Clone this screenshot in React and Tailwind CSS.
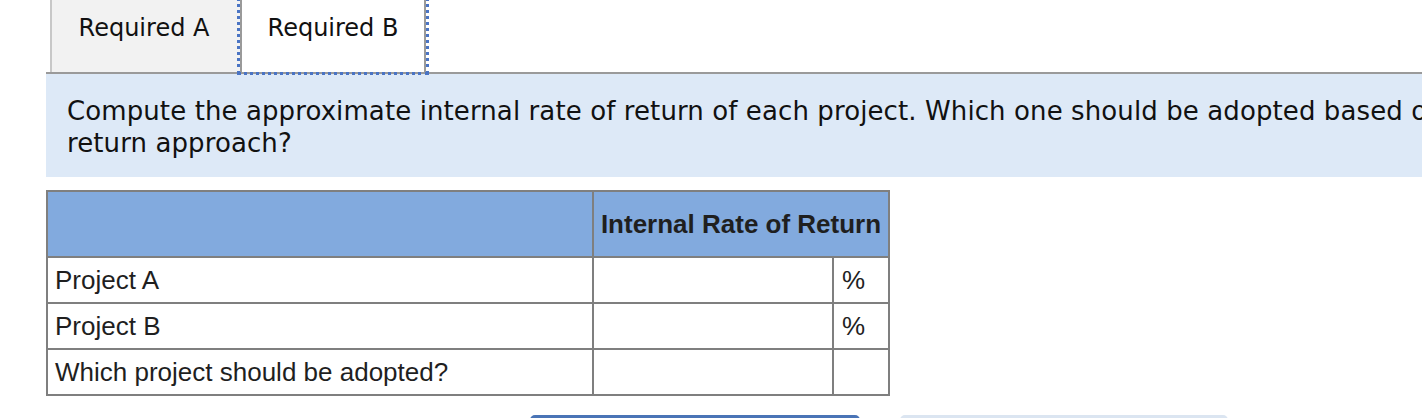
import React from "react";

export default function App() {
  const verdana = { fontFamily: '"DejaVu Sans", Verdana, sans-serif' };
  const arial = { fontFamily: '"Liberation Sans", Arial, Helvetica, sans-serif' };
  return (
    <div className="w-[1422px] h-[418px] overflow-hidden bg-white relative">
      <div className="ml-[46px] w-[1700px]">
        {/* Tabs */}
        <div className="flex h-[72px] pl-[4px] text-[24px] text-[#111]" style={verdana}>
          <div className="w-[190px] h-full bg-[#f2f2f2] border-l-2 border-[#c8c8c8] text-center pt-[12px] pr-[4px] leading-[32px]">
            Required A
          </div>
          <div className="w-[186px] h-full bg-white border-x-2 border-[#9a9a9a] text-center pt-[12px] leading-[32px] outline-[3px] outline-dotted outline-[#4a74c4] relative z-10">
            Required B
          </div>
        </div>
        {/* Question panel */}
        <div
          className="border-t-2 border-[#9a9a9a] bg-[#dde9f7] pl-[21px] pt-[21px] pb-[18px] text-[26px] leading-[32px] tracking-[0.1px] text-[#111] whitespace-nowrap"
          style={verdana}
        >
          Compute the approximate internal rate of return of each project. Which one should be adopted based on the internal rate of
          <br />
          return approach?
        </div>
        {/* Table */}
        <table
          className="mt-[13px] w-[842px] table-fixed border-collapse border-2 border-[#7f7f7f] text-[26px] text-[#1f1f1f]"
          style={arial}
        >
          <colgroup>
            <col className="w-[546px]" />
            <col className="w-[240px]" />
            <col className="w-[56px]" />
          </colgroup>
          <tbody>
            <tr className="h-[66px] bg-[#82aade]">
              <td className="border-2 border-[#7f7f7f]"></td>
              <td colSpan={2} className="border-2 border-[#7f7f7f] text-center font-bold">
                Internal Rate of Return
              </td>
            </tr>
            <tr className="h-[46px]">
              <td className="border-2 border-[#7f7f7f] pl-[7px]">Project A</td>
              <td className="border-2 border-[#7f7f7f]"></td>
              <td className="border-2 border-[#7f7f7f] pl-[8px]">%</td>
            </tr>
            <tr className="h-[46px]">
              <td className="border-2 border-[#7f7f7f] pl-[7px]">Project B</td>
              <td className="border-2 border-[#7f7f7f]"></td>
              <td className="border-2 border-[#7f7f7f] pl-[8px]">%</td>
            </tr>
            <tr className="h-[46px]">
              <td className="border-2 border-[#7f7f7f] pl-[7px]">Which project should be adopted?</td>
              <td className="border-2 border-[#7f7f7f]"></td>
              <td className="border-2 border-[#7f7f7f]"></td>
            </tr>
          </tbody>
        </table>
        {/* Buttons */}
        <div className="flex gap-[40px] mt-[19px] ml-[484px]">
          <button className="w-[330px] h-[44px] rounded-[5px] bg-[#4a74b6]"></button>
          <button className="w-[328px] h-[44px] rounded-[5px] bg-[#dbe5f1]"></button>
        </div>
      </div>
    </div>
  );
}
